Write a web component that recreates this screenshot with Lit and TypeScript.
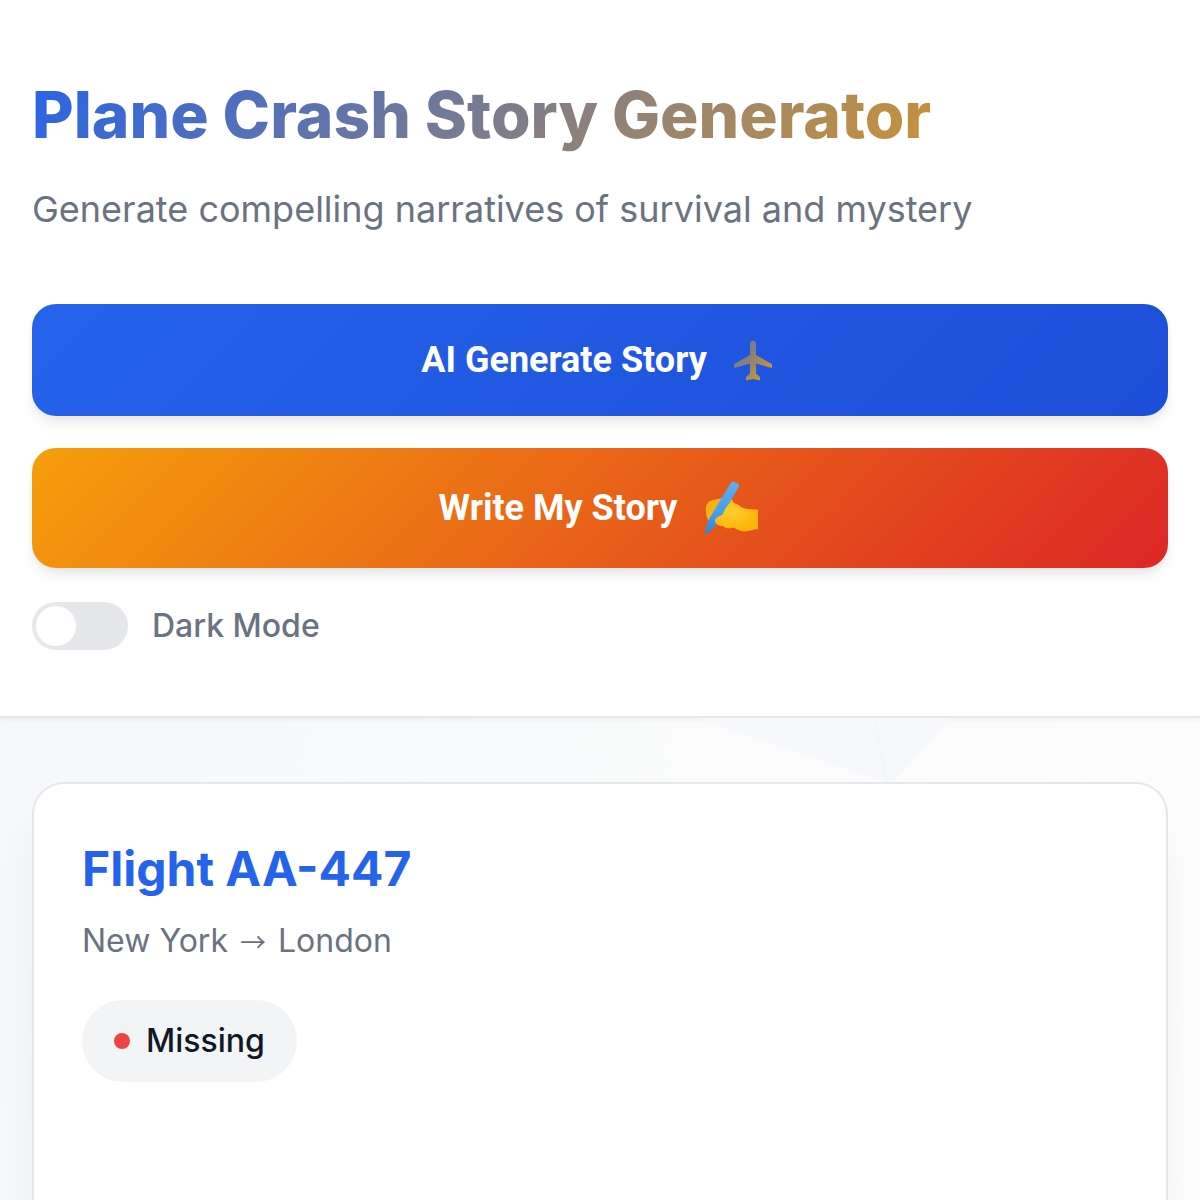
import { LitElement, html, css } from "lit";
import { customElement, state } from "lit/decorators.js";

@customElement("app-root")
export class AppRoot extends LitElement {
  @state() private dark = false;

  static styles = css`
    :host {
      display: block;
      font-family: Inter, "Liberation Sans", sans-serif;
      font-size: 32px;
      line-height: 52px;
      color: #111827;
    }
    * {
      box-sizing: border-box;
    }
    .page {
      display: flex;
      flex-direction: column;
      min-height: 100vh;
      overflow: hidden;
      background: linear-gradient(100deg, #f6f7f9 0%, #f9fafb 45%, #fcfcfc 80%, #fdfdfd 100%);
    }
    header {
      position: relative;
      padding: 64px 32px;
      background: #fff;
      border-bottom: 2px solid #e5e7eb;
      box-shadow: 0 2px 6px rgba(0, 0, 0, 0.05);
    }
    h1 {
      margin: 0 0 16px;
      font-size: 64px;
      line-height: 102px;
      font-weight: 800;
      color: transparent;
      background: linear-gradient(135deg, #2563eb 0%, #f59e0b 100%);
      -webkit-background-clip: text;
      background-clip: text;
    }
    .subtitle {
      margin: 0 0 68px;
      font-size: 36px;
      line-height: 54px;
      color: #6b7280;
    }
    .actions {
      display: flex;
      flex-direction: column;
      gap: 32px;
    }
    .action {
      display: flex;
      align-items: center;
      justify-content: center;
      gap: 24px;
      width: 100%;
      padding: 28px 32px;
      border: 0;
      border-radius: 24px;
      color: #fff;
      font-family: Roboto, "Liberation Sans", sans-serif;
      font-size: 36px;
      line-height: 56px;
      font-weight: 700;
      cursor: pointer;
      box-shadow: 0 8px 12px -2px rgba(0, 0, 0, 0.1);
    }
    .action svg {
      display: block;
      flex: none;
    }
    .generate {
      background: linear-gradient(135deg, #2563eb, #1d4ed8);
    }
    .write {
      padding: 30px 32px;
      line-height: 60px;
      background: linear-gradient(135deg, #f59e0b, #dc2626);
    }
    .toggle {
      display: flex;
      align-items: center;
      gap: 24px;
      margin-top: 32px;
      width: fit-content;
      font-weight: 500;
      color: #6b7280;
      cursor: pointer;
    }
    .toggle input {
      appearance: none;
      display: flex;
      flex: none;
      width: 96px;
      height: 48px;
      margin: 0;
      padding: 4px;
      border-radius: 24px;
      background: #e5e7eb;
      cursor: pointer;
    }
    .toggle input::before {
      content: "";
      width: 40px;
      height: 40px;
      border-radius: 50%;
      background: #fff;
    }
    .toggle input:checked {
      justify-content: flex-end;
      background: #2563eb;
    }
    main {
      position: relative;
      flex: 1;
      display: flex;
      flex-direction: column;
      padding: 64px 32px 0;
    }
    .backdrop {
      position: absolute;
      top: 0;
      left: 58%;
      width: 260px;
      height: 80px;
    }
    .card {
      position: relative;
      flex: 1;
      padding: 48px;
      background: #fff;
      border: 2px solid #e5e7eb;
      border-bottom: 0;
      border-radius: 32px 32px 0 0;
      box-shadow: 0 40px 50px -10px rgba(0, 0, 0, 0.07);
    }
    h2 {
      margin: 0 0 9px;
      font-size: 48px;
      line-height: 74px;
      font-weight: 700;
      color: #2563eb;
    }
    .route {
      margin: 0 0 33px;
      color: #6b7280;
    }
    .arrow {
      margin: 0 3px;
      font-family: "Noto Sans CJK SC", sans-serif;
      font-size: 26px;
      line-height: 1;
    }
    .status {
      display: inline-flex;
      align-items: center;
      gap: 16px;
      padding: 16px 32px;
      border-radius: 48px;
      background: #f3f4f6;
      line-height: 50px;
      font-weight: 500;
    }
    .dot {
      width: 16px;
      height: 16px;
      border-radius: 50%;
      background: #ef4444;
    }
  `;

  private toggleDark(e: Event) {
    this.dark = (e.target as HTMLInputElement).checked;
  }

  render() {
    return html`
      <div class="page">
        <header>
          <h1>Plane Crash Story Generator</h1>
          <p class="subtitle">Generate compelling narratives of survival and mystery</p>
          <div class="actions">
            <button class="action generate" type="button">
              AI Generate Story
              <svg width="48" height="48" viewBox="1 0 48 48" aria-hidden="true">
                <defs>
                  <linearGradient id="plane" x1="0" y1="0" x2="1" y2="1">
                    <stop offset="0.2" stop-color="#70789a" />
                    <stop offset="0.5" stop-color="#94856f" />
                    <stop offset="0.8" stop-color="#c49339" />
                  </linearGradient>
                </defs>
                <path
                  fill="url(#plane)"
                  d="M23 4.500c1.700 0 3 1.200 3 3.500v11l16 9V32l-16-4.500v10l4 3.500v3.500l-7-1.500-7 1.500V41l4-3.500v-10L4 32v-4l16-9V8c0-2.300 1.300-3.500 3-3.500z"
                />
              </svg>
            </button>
            <button class="action write" type="button">
              Write My Story
              <svg width="60" height="60" viewBox="1 0 60 60" aria-hidden="true">
                <defs>
                  <linearGradient id="pen" x1="0" y1="0" x2="0" y2="1">
                    <stop offset="0" stop-color="#5caeee" />
                    <stop offset="0.6" stop-color="#42a0ee" />
                    <stop offset="1" stop-color="#1e88e5" />
                  </linearGradient>
                  <radialGradient id="hand" cx="0.4" cy="0.35" r="0.6">
                    <stop offset="0" stop-color="#ffcf2e" />
                    <stop offset="1" stop-color="#fcb40a" />
                  </radialGradient>
                </defs>
                <path
                  fill="#f7b017"
                  d="M6 34c-1-7 2-11 7-12l10-2c6-1 9 0 11 5L14 46c-5-1-8-6-8-12z"
                />
                <path
                  fill="url(#pen)"
                  d="M30.500 5.500c1-2 2.500-2.300 4-1.500l3.500 1.700c1.500.8 1.300 2 .5 3.800L16 47l-9 8.500c-1.500 1.200-2.500.7-2-1.200L8.500 42z"
                />
                <path
                  fill="url(#hand)"
                  d="M30 25c5-1 8 2 12 4.500 5 2 10 2 16 2V51c-5 0-8 2.500-13 2.500-5 0-8-2.500-12-4-4 1.500-8 1-10-1.500-5 .5-8-2.500-8-6 1-3 5-4 8-5.500 1-4 3-8 7-11.500z"
                />
              </svg>
            </button>
          </div>
          <label class="toggle">
            <input type="checkbox" role="switch" .checked=${this.dark} @change=${this.toggleDark} />
            Dark Mode
          </label>
        </header>
        <main>
          <svg class="backdrop" viewBox="0 0 260 80" aria-hidden="true">
            <path fill="#f6f8fc" d="M2 0h252l-56 64h-10z" />
            <path fill="#f4f6fb" d="M180 0l12 64h-4L178 0z" />
          </svg>
          <section class="card">
            <h2>Flight AA-447</h2>
            <p class="route">New York <span class="arrow">→</span> London</p>
            <span class="status"><span class="dot"></span>Missing</span>
          </section>
        </main>
      </div>
    `;
  }
}
